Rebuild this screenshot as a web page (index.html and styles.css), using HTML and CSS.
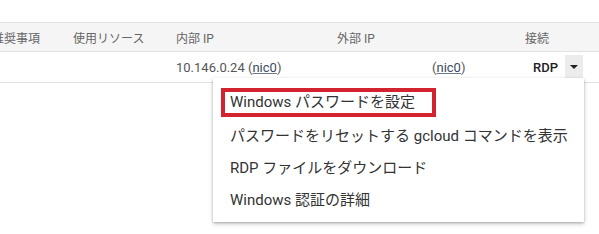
FILE: index.html
```html
<!DOCTYPE html>
<html lang="ja">
<head>
<meta charset="utf-8">
<title>VM instances</title>
<link rel="stylesheet" href="styles.css">
</head>
<body>
<div class="page">
  <div class="table">
    <div class="row head">
      <div class="cell">推奨事項</div>
      <div class="cell">使用リソース</div>
      <div class="cell">内部 IP</div>
      <div class="cell">外部 IP</div>
      <div class="cell">接続</div>
    </div>
    <div class="row body">
      <div class="cell"></div>
      <div class="cell"></div>
      <div class="cell">10.146.0.24 (<a class="link">nic0</a>)</div>
      <div class="cell ext">(<a class="link">nic0</a>)</div>
      <div class="cell conn">
        <span class="rdp">RDP</span>
        <span class="drop"><svg width="8" height="4" viewBox="0 0 8 4"><path d="M0 0h8L4 4z" fill="#202124"/></svg></span>
      </div>
    </div>
  </div>
  <div class="menu">
    <div class="item"><span class="mark">Windows パスワードを設定</span></div>
    <div class="item">パスワードをリセットする gcloud コマンドを表示</div>
    <div class="item">RDP ファイルをダウンロード</div>
    <div class="item">Windows 認証の詳細</div>
  </div>
</div>
</body>
</html>
```
FILE: styles.css
```css
html, body {
  margin: 0;
  padding: 0;
  background: #fff;
}
body {
  font-family: Roboto, "Noto Sans CJK JP", sans-serif;
  width: 599px;
  height: 234px;
  overflow: hidden;
}
.page {
  position: relative;
  padding-top: 22px;
  height: 212px;
}
.table {
  margin-left: -8px;
}
.row {
  display: grid;
  grid-template-columns: 81px 103px 161px 188px 1fr;
  align-items: center;
}
.head {
  height: 28px;
  background: #f5f5f5;
  border-top: 1px solid #e2e2e2;
  border-bottom: 1px solid #e2e2e2;
  font-size: 12px;
  color: #666;
}
.body {
  height: 30px;
  border-bottom: 1px solid #e2e2e2;
  font-size: 13px;
  color: #555;
}
.cell {
  white-space: nowrap;
}
.link {
  color: #3b4a63;
  text-decoration: underline;
  text-decoration-color: #6b7a95;
}
.ext {
  padding-left: 95px;
}
.conn {
  display: flex;
  align-items: center;
  padding-left: 8px;
}
.rdp {
  color: #212121;
  font-weight: 500;
  width: 32px;
}
.drop {
  width: 18px;
  height: 24px;
  background: #ececec;
  display: flex;
  align-items: center;
  justify-content: center;
}
.menu {
  position: absolute;
  left: 213px;
  top: 78px;
  width: 371px;
  padding: 8px 0;
  background: #fff;
  box-shadow: 0 1px 2px rgba(0,0,0,0.22), 0 2px 5px rgba(0,0,0,0.18);
}
.item {
  height: 32px;
  display: flex;
  align-items: center;
  padding-left: 17px;
  font-size: 15px;
  color: #333;
  white-space: nowrap;
}
.mark {
  border: 4px solid #d2232f;
  margin-left: -9px;
  padding: 0 17px 0 5px;
  line-height: 21px;
}
```
